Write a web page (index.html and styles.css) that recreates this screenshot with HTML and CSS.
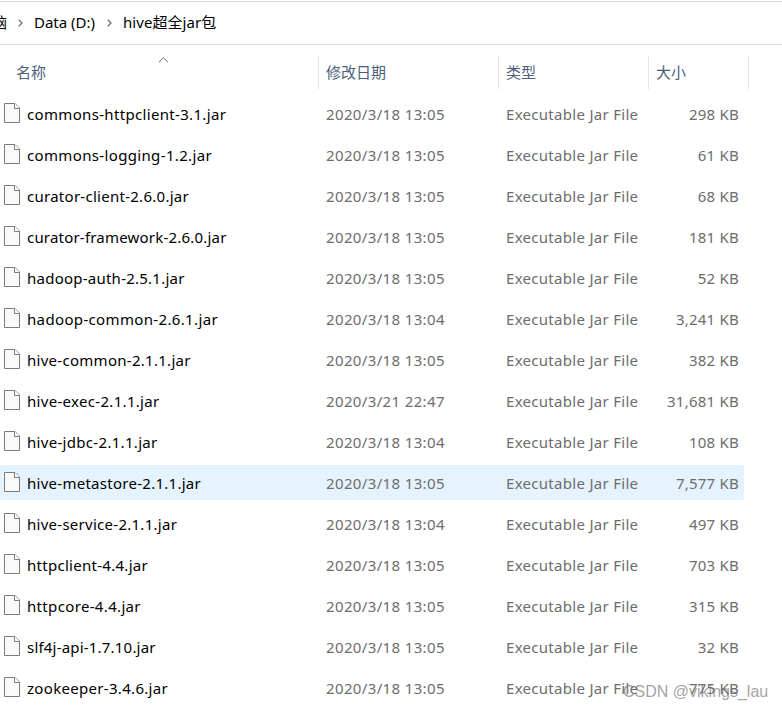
FILE: index.html
```html
<!DOCTYPE html>
<html lang="zh-CN">
<head>
<meta charset="utf-8">
<title>hive超全jar包</title>
<link rel="stylesheet" href="styles.css">
</head>
<body>
<svg class="defs" width="0" height="0"><symbol id="file" viewBox="0 0 16 20"><path d="M.5.5H11L15.5 5V19.5H.5Z" fill="#fafafa" stroke="#7c7c7c"/><path d="M10.5.5V5.5H15.5" fill="#fff" stroke="#7c7c7c"/></symbol><symbol id="chev" viewBox="0 0 5 8"><path d="M.7.7 4 4 .7 7.3" fill="none" stroke="#666" stroke-width="1.2"/></symbol></svg>
<nav class="crumbs">
<span class="cut">脑</span><svg class="chev"><use href="#chev"/></svg><span class="drive">Data (D:)</span><svg class="chev"><use href="#chev"/></svg><span class="folder">hive超全jar包</span>
</nav>
<header class="grid head">
<div>名称<svg class="sort" viewBox="0 0 10 6"><path d="M.5 5.2 5 .8 9.5 5.2" fill="none" stroke="#666"/></svg></div><div>修改日期</div><div>类型</div><div>大小</div>
</header>
<main id="list"></main>
<div class="mark">CSDN @vikings_lau</div>
<script src="files.js"></script>
</body>
</html>
```
FILE: styles.css
```css
* { box-sizing: border-box; }
body { margin: 0; width: 782px; height: 711px; overflow: hidden; position: relative; background: #fff; color: #000; font-family: "Noto Sans", "Noto Sans CJK SC", sans-serif; font-size: 15px; white-space: nowrap; }
.defs { position: absolute; }
.crumbs { height: 44px; margin-top: 1px; border-top: 1px solid #d9d9d9; border-bottom: 1px solid #d9d9d9; display: flex; align-items: center; line-height: 22px; }
.crumbs span { margin-bottom: 2px; }
.cut { width: 7px; height: 22px; overflow: hidden; display: flex; justify-content: flex-end; }
.chev { width: 5px; height: 8px; margin-left: 11px; flex: none; }
.drive { width: 62px; margin-left: 11px; }
.folder { margin-left: 11px; letter-spacing: .05px; }
.grid { display: grid; grid-template-columns: 319px 180px 150px 100px; }
.head { height: 32px; margin-top: 11px; margin-bottom: 8px; color: #4c607a; line-height: 33px; }
.head div { border-right: 1px solid #e2e2e2; padding-left: 7px; position: relative; }
.head div:first-child { padding-left: 16px; }
.sort { position: absolute; left: 158px; top: 1px; width: 11px; height: 6px; }
.row { width: 744px; height: 35px; margin-bottom: 6px; border-radius: 2px; line-height: 36px; color: #6d6d6d; grid-template-columns: 319px 180px 150px 90px; }
.row.selected { background: #e5f3ff; }
.name { display: flex; padding-left: 4px; color: #000; }
.name svg { width: 16px; height: 20px; margin: 7px 7px 0 0; flex: none; }
.date, .type { padding-left: 7px; }
.date { letter-spacing: .36px; }
.type { letter-spacing: .29px; }
.size { text-align: right; letter-spacing: .23px; }
.mark { position: absolute; left: 623px; top: 682px; line-height: 20px; font-family: "Liberation Sans", sans-serif; font-size: 16px; color: rgba(110,110,110,.65); }
```
FILE: files.js
```js
// name, day and time, size in KB, tracking in px
const files = [
  ["commons-httpclient-3.1", "18 13:05", "298", .33],
  ["commons-logging-1.2", "18 13:05", "61", .35],
  ["curator-client-2.6.0", "18 13:05", "68", .27],
  ["curator-framework-2.6.0", "18 13:05", "181", .2],
  ["hadoop-auth-2.5.1", "18 13:05", "52", .24],
  ["hadoop-common-2.6.1", "18 13:04", "3,241", .35],
  ["hive-common-2.1.1", "18 13:05", "382", .28],
  ["hive-exec-2.1.1", "21 22:47", "31,681", .31],
  ["hive-jdbc-2.1.1", "18 13:04", "108", .31],
  ["hive-metastore-2.1.1", "18 13:05", "7,577", .27],
  ["hive-service-2.1.1", "18 13:04", "497", .27],
  ["httpclient-4.4", "18 13:05", "703", .28],
  ["httpcore-4.4", "18 13:05", "315", .34],
  ["slf4j-api-1.7.10", "18 13:05", "32", .2],
  ["zookeeper-3.4.6", "18 13:05", "775", .31]
];
document.getElementById("list").innerHTML = files.map(([name, date, size, track], i) =>
  `<div class="grid row${i === 9 ? " selected" : ""}"><div class="name"><svg><use href="#file"/></svg><span style="letter-spacing:${track}px">${name}.jar</span></div><div class="date"><span>2020/3/${date}</span></div><div class="type"><span>Executable Jar File</span></div><div class="size"><span>${size} KB</span></div></div>`
).join("");
```
